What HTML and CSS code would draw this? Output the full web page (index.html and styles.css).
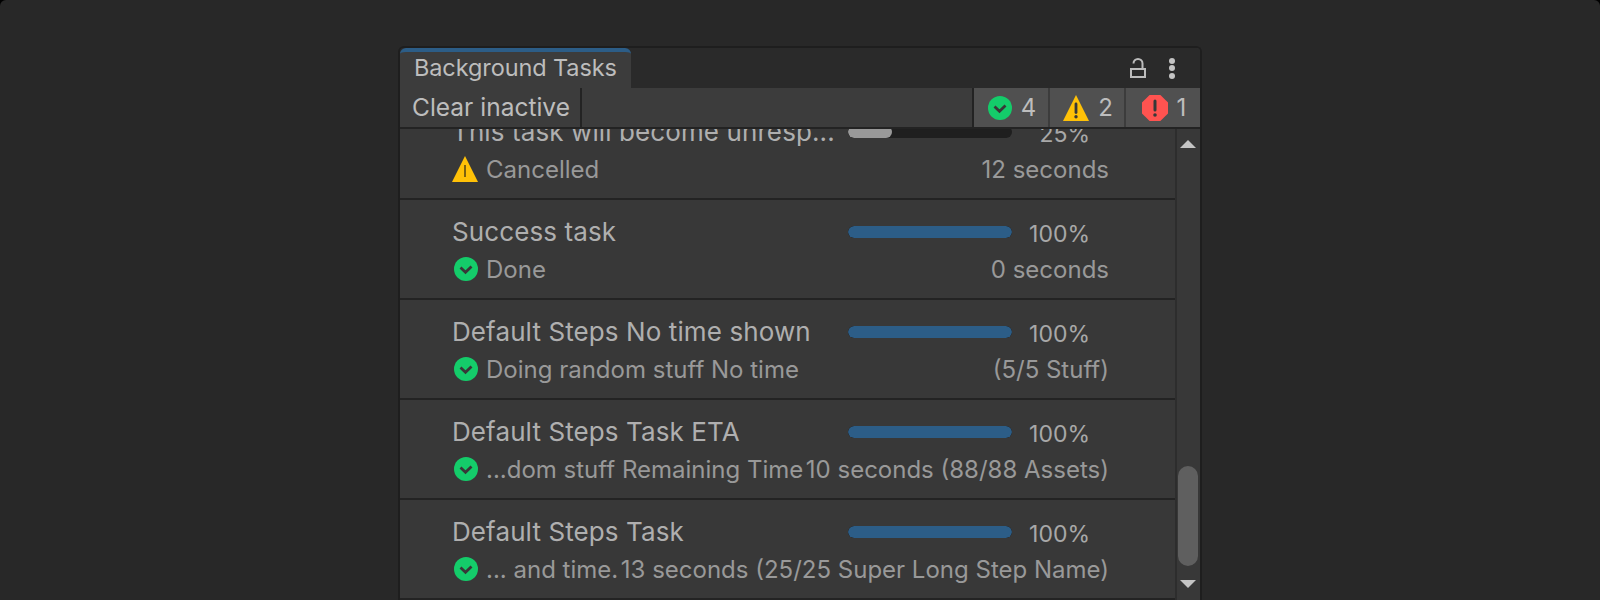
FILE: index.html
```html
<!DOCTYPE html>
<html lang="en">

<head>
    <meta charset="UTF-8">
    <meta name="viewport" content="width=device-width, initial-scale=1.0">
    <title>Background Tasks</title>
    <link rel="stylesheet" href="styles.css">
</head>

<body>
    <svg class="icon-defs" width="0" height="0">
        <symbol id="icon-ok" viewBox="0 0 24 24">
            <circle cx="12" cy="12" r="12" fill="#14cc6a"/>
            <path d="M6.500 10.500l5 4.700 6-5.700" fill="none" stroke="#383838" stroke-width="2.800"/>
        </symbol>
        <symbol id="icon-warn" viewBox="0 0 26 26">
            <path d="M13 0L26 26H0z" fill="#ffc107"/>
            <path d="M13 9v8.500" stroke="#383838" stroke-width="2.800" stroke-linecap="round"/>
            <circle cx="13" cy="21.800" r="1.700" fill="#383838"/>
        </symbol>
        <symbol id="icon-warn-thin" viewBox="0 0 26 26">
            <path d="M13 0L26 26H0z" fill="#ffc107"/>
            <path d="M13 9v12" stroke="#5c4a14" stroke-width="1.600"/>
        </symbol>
        <symbol id="icon-error" viewBox="0 0 26 26">
            <path d="M7.600 0h10.800L26 7.600v10.800L18.400 26H7.600L0 18.400V7.600z" fill="#ff5350"/>
            <path d="M13 6v9" stroke="#383838" stroke-width="3" stroke-linecap="round"/>
            <circle cx="13" cy="20" r="1.800" fill="#383838"/>
        </symbol>
    </svg>

    <div class="window">
        <div class="tab-strip">
            <div class="tab">Background Tasks</div>
            <div class="tab-actions">
                <svg class="lock" width="16" height="20" viewBox="0 0 16 20">
                    <path d="M1 11h14v8H1zM3.500 5.500a4.500 4.500 0 0 1 9 0V11" fill="none" stroke="#bcbcbc" stroke-width="2"/>
                </svg>
                <div class="menu-dots"><span></span><span></span><span></span></div>
            </div>
        </div>

        <div class="toolbar">
            <div class="clear-btn">Clear inactive</div>
            <div class="counters">
                <div class="counter"><svg class="counter-icon ok"><use href="#icon-ok"/></svg>4</div>
                <div class="counter"><svg class="counter-icon"><use href="#icon-warn"/></svg>2</div>
                <div class="counter"><svg class="counter-icon"><use href="#icon-error"/></svg>1</div>
            </div>
        </div>

        <div class="content">
            <div class="task-list">
                <div class="task">
                    <div class="task-top">
                        <div class="task-name">This task will become unresp...</div>
                        <div class="bar"><div class="bar-fill grey"></div></div>
                        <div class="pct">25%</div>
                    </div>
                    <div class="task-bottom">
                        <svg class="status-icon warn"><use href="#icon-warn-thin"/></svg>
                        <div class="status">Cancelled</div>
                        <div class="detail">12 seconds</div>
                    </div>
                </div>
                <div class="task">
                    <div class="task-top">
                        <div class="task-name">Success task</div>
                        <div class="bar"><div class="bar-fill"></div></div>
                        <div class="pct">100%</div>
                    </div>
                    <div class="task-bottom">
                        <svg class="status-icon"><use href="#icon-ok"/></svg>
                        <div class="status">Done</div>
                        <div class="detail">0 seconds</div>
                    </div>
                </div>
                <div class="task">
                    <div class="task-top">
                        <div class="task-name">Default Steps No time shown</div>
                        <div class="bar"><div class="bar-fill"></div></div>
                        <div class="pct">100%</div>
                    </div>
                    <div class="task-bottom">
                        <svg class="status-icon"><use href="#icon-ok"/></svg>
                        <div class="status">Doing random stuff No time</div>
                        <div class="detail">(5/5 Stuff)</div>
                    </div>
                </div>
                <div class="task">
                    <div class="task-top">
                        <div class="task-name">Default Steps Task ETA</div>
                        <div class="bar"><div class="bar-fill"></div></div>
                        <div class="pct">100%</div>
                    </div>
                    <div class="task-bottom">
                        <svg class="status-icon"><use href="#icon-ok"/></svg>
                        <div class="status">...dom stuff Remaining Time</div>
                        <div class="detail">10 seconds (88/88 Assets)</div>
                    </div>
                </div>
                <div class="task">
                    <div class="task-top">
                        <div class="task-name">Default Steps Task</div>
                        <div class="bar"><div class="bar-fill"></div></div>
                        <div class="pct">100%</div>
                    </div>
                    <div class="task-bottom">
                        <svg class="status-icon"><use href="#icon-ok"/></svg>
                        <div class="status">... and time.</div>
                        <div class="detail">13 seconds (25/25 Super Long Step Name)</div>
                    </div>
                </div>
            </div>
            <div class="scrollbar">
                <div class="arrow-up"></div>
                <div class="track"><div class="thumb"></div></div>
                <div class="arrow-down"></div>
            </div>
        </div>
    </div>
</body>

</html>
```

FILE: styles.css
```css
html {
    background-color: #000;
}

body {
    font-family: 'Inter', 'Liberation Sans', sans-serif;
    margin: 0;
    padding: 46px 0 0 398px;
    height: 554px;
    overflow: hidden;
    background-color: #282828;
    border-radius: 6px 6px 0 0;
}

.icon-defs {
    display: block;
    height: 0;
}

.window {
    width: 804px;
    height: 554px;
    box-sizing: border-box;
    border: 2px solid #1e1e1e;
    border-bottom: none;
    border-radius: 6px 6px 0 0;
    background-color: #383838;
    overflow: hidden;
}

.tab-strip {
    display: flex;
    justify-content: space-between;
    height: 40px;
    background-color: #2a2a2a;
    box-sizing: border-box;
}

.tab {
    width: 231px;
    box-sizing: border-box;
    padding: 0 0 0 14px;
    font-size: 23.5px;
    line-height: 32px;
    letter-spacing: -0.1px;
    color: #bdbdbd;
    background-color: #3c3c3c;
    border-top: 4px solid #2c5d87;
    border-radius: 6px 6px 0 0;
}

.tab-actions {
    display: flex;
    align-items: center;
    gap: 23px;
    padding-right: 25px;
}

.menu-dots {
    display: flex;
    flex-direction: column;
    gap: 1.500px;
}

.menu-dots span {
    width: 6px;
    height: 6px;
    border-radius: 50%;
    background-color: #c4c4c4;
}

.toolbar {
    display: flex;
    justify-content: space-between;
    height: 41px;
    box-sizing: border-box;
    background-color: #3c3c3c;
    border-bottom: 2px solid #232323;
}

.clear-btn {
    width: 182px;
    height: 39px;
    box-sizing: border-box;
    padding-left: 12px;
    font-size: 24.5px;
    line-height: 39px;
    color: #bdbdbd;
    border-right: 2px solid #232323;
}

.counters {
    display: flex;
    gap: 2px;
    border-left: 2px solid #232323;
}

.counter {
    display: flex;
    align-items: center;
    gap: 9px;
    width: 74px;
    padding-left: 2px;
    box-sizing: border-box;
    justify-content: center;
    font-size: 24px;
    color: #bdbdbd;
    background-color: #505050;
}

.counter-icon {
    width: 26px;
    height: 26px;
}

.counter-icon.ok {
    width: 24px;
    height: 24px;
}

.content {
    display: flex;
    height: 471px;
    overflow: hidden;
}

.task-list {
    width: 775px;
    margin-top: -29px;
}

.task {
    height: 100px;
    box-sizing: border-box;
    padding: 13px 66px 0 52px;
    border-bottom: 2px solid #232323;
}

.task-top {
    display: flex;
    align-items: center;
    height: 38px;
    margin-bottom: 1px;
}

.task-name {
    width: 396px;
    padding-bottom: 2px;
    font-size: 26px;
    letter-spacing: 0.1px;
    white-space: nowrap;
    color: #afafaf;
}

.bar {
    width: 164px;
    height: 12px;
    border-radius: 6px;
    background-color: #1f1f1f;
    overflow: hidden;
}

.bar-fill {
    height: 100%;
    border-radius: 6px;
    background-color: #2c5d87;
}

.bar-fill.grey {
    width: 44px;
    background-color: #999999;
}

.pct {
    width: 78px;
    padding-top: 3px;
    text-align: right;
    font-size: 23px;
    color: #a8a8a8;
}

.task-bottom {
    display: flex;
    align-items: center;
    height: 34px;
    font-size: 24px;
    color: #999999;
}

.status-icon {
    width: 24px;
    height: 24px;
    margin: 0 8px 0 2px;
    flex-shrink: 0;
}

.status-icon.warn {
    width: 26px;
    height: 26px;
    margin: 0 8px 0 0;
}

.status {
    white-space: nowrap;
}

.detail {
    margin-left: auto;
    white-space: nowrap;
}

.scrollbar {
    flex: 1;
    display: flex;
    flex-direction: column;
    align-items: center;
    padding-right: 1px;
    border-left: 2px solid #2d2d2d;
    background-color: #383838;
}

.arrow-up,
.arrow-down {
    width: 0;
    height: 0;
    border-left: 8px solid transparent;
    border-right: 8px solid transparent;
}

.arrow-up {
    margin-top: 11px;
    border-bottom: 8px solid #c4c4c4;
}

.arrow-down {
    margin-bottom: 12px;
    border-top: 8px solid #c4c4c4;
}

.track {
    flex: 1;
    display: flex;
    align-items: flex-end;
    padding-bottom: 14px;
}

.thumb {
    width: 20px;
    height: 100px;
    border-radius: 10px;
    background-color: #5f5f5f;
}
```
